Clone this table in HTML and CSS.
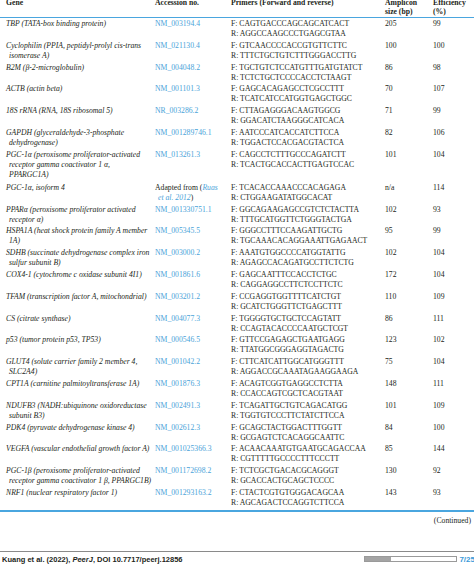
FILE: index.html
```html
<!DOCTYPE html>
<html>
<head>
<meta charset="utf-8">
<link rel="stylesheet" href="styles.css">
</head>
<body>
<div class="page">
<table class="primers">
<colgroup>
<col class="c-gene"><col class="c-acc"><col class="c-pri"><col class="c-amp"><col class="c-eff">
</colgroup>
<thead>
<tr>
<th class="gene">Gene</th>
<th>Accession no.</th>
<th>Primers (Forward and reverse)</th>
<th>Amplicon<br>size (bp)</th>
<th>Efficiency<br>(%)</th>
</tr>
</thead>
<tbody>
<tr><td class="gene">TBP (TATA-box binding protein)</td><td class="acc">NM_003194.4</td><td>F: CAGTGACCCAGCAGCATCACT<br>R: AGGCCAAGCCCTGAGCGTAA</td><td>205</td><td>99</td></tr>
<tr><td class="gene">Cyclophilin (PPIA, peptidyl-prolyl cis-trans<br>isomerase A)</td><td class="acc">NM_021130.4</td><td>F: GTCAACCCCACCGTGTTCTTC<br>R: TTTCTGCTGTCTTTGGGACCTTG</td><td>100</td><td>100</td></tr>
<tr><td class="gene">B2M (β-2-microglobulin)</td><td class="acc">NM_004048.2</td><td>F: TGCTGTCTCCATGTTTGATGTATCT<br>R: TCTCTGCTCCCCACCTCTAAGT</td><td>86</td><td>98</td></tr>
<tr><td class="gene">ACTB (actin beta)</td><td class="acc">NM_001101.3</td><td>F: GAGCACAGAGCCTCGCCTTT<br>R: TCATCATCCATGGTGAGCTGGC</td><td>70</td><td>107</td></tr>
<tr><td class="gene">18S rRNA (RNA, 18S ribosomal 5)</td><td class="acc">NR_003286.2</td><td>F: CTTAGAGGGACAAGTGGCG<br>R: GGACATCTAAGGGCATCACA</td><td>71</td><td>99</td></tr>
<tr><td class="gene">GAPDH (glyceraldehyde-3-phosphate<br>dehydrogenase)</td><td class="acc">NM_001289746.1</td><td>F: AATCCCATCACCATCTTCCA<br>R: TGGACTCCACGACGTACTCA</td><td>82</td><td>106</td></tr>
<tr class="tall"><td class="gene">PGC-1α (peroxisome proliferator-activated<br>receptor gamma coactivator 1 α,<br>PPARGC1A)</td><td class="acc">NM_013261.3</td><td>F: CAGCCTCTTTGCCCAGATCTT<br>R: TCACTGCACCACTTGAGTCCAC</td><td>101</td><td>104</td></tr>
<tr><td class="gene">PGC-1α, isoform 4</td><td class="src">Adapted from (<a class="ref">Ruas<br>et al. 2012</a>)</td><td>F: TCACACCAAACCCACAGAGA<br>R: CTGGAAGATATGGCACAT</td><td>n/a</td><td>114</td></tr>
<tr><td class="gene">PPARα (peroxisome proliferator activated<br>receptor α)</td><td class="acc">NM_001330751.1</td><td>F: GGCAGAAGAGCCGTCTCTACTTA<br>R: TTTGCATGGTTCTGGGTACTGA</td><td>102</td><td>93</td></tr>
<tr><td class="gene">HSPA1A (heat shock protein family A member<br>1A)</td><td class="acc">NM_005345.5</td><td>F: GGGCCTTTCCAAGATTGCTG<br>R: TGCAAACACAGGAAATTGAGAACT</td><td>95</td><td>99</td></tr>
<tr><td class="gene">SDHB (succinate dehydrogenase complex iron<br>sulfur subunit B)</td><td class="acc">NM_003000.2</td><td>F: AAATGTGGCCCCATGGTATTG<br>R: AGAGCCACAGATGCCTTCTCTG</td><td>102</td><td>104</td></tr>
<tr><td class="gene">COX4-1 (cytochrome c oxidase subunit 4I1)</td><td class="acc">NM_001861.6</td><td>F: GAGCAATTTCCACCTCTGC<br>R: CAGGAGGCCTTCTCCTTCTC</td><td>172</td><td>104</td></tr>
<tr><td class="gene">TFAM (transcription factor A, mitochondrial)</td><td class="acc">NM_003201.2</td><td>F: CCGAGGTGGTTTTCATCTGT<br>R: GCATCTGGGTTCTGAGCTTT</td><td>110</td><td>109</td></tr>
<tr><td class="gene">CS (citrate synthase)</td><td class="acc">NM_004077.3</td><td>F: TGGGGTGCTGCTCCAGTATT<br>R: CCAGTACACCCCAATGCTCGT</td><td>86</td><td>111</td></tr>
<tr><td class="gene">p53 (tumor protein p53, TP53)</td><td class="acc">NM_000546.5</td><td>F: GTTCCGAGAGCTGAATGAGG<br>R: TTATGGCGGGAGGTAGACTG</td><td>123</td><td>102</td></tr>
<tr><td class="gene">GLUT4 (solute carrier family 2 member 4,<br>SLC2A4)</td><td class="acc">NM_001042.2</td><td>F: CTTCATCATTGGCATGGGTTT<br>R: AGGACCGCAAATAGAAGGAAGA</td><td>75</td><td>104</td></tr>
<tr><td class="gene">CPT1A (carnitine palmitoyltransferase 1A)</td><td class="acc">NM_001876.3</td><td>F: ACAGTCGGTGAGGCCTCTTA<br>R: CCACCAGTCGCTCACGTAAT</td><td>148</td><td>111</td></tr>
<tr><td class="gene">NDUFB3 (NADH:ubiquinone oxidoreductase<br>subunit B3)</td><td class="acc">NM_002491.3</td><td>F: TCAGATTGCTGTCAGACATGG<br>R: TGGTGTCCCTTCTATCTTCCA</td><td>101</td><td>109</td></tr>
<tr><td class="gene">PDK4 (pyruvate dehydrogenase kinase 4)</td><td class="acc">NM_002612.3</td><td>F: GCAGCTACTGGACTTTGGTT<br>R: GCGAGTCTCACAGGCAATTC</td><td>84</td><td>100</td></tr>
<tr><td class="gene">VEGFA (vascular endothelial growth factor A)</td><td class="acc">NM_001025366.3</td><td>F: ACAACAAATGTGAATGCAGACCAA<br>R: CGTTTTTGCCCCTTTCCCTT</td><td>85</td><td>144</td></tr>
<tr><td class="gene">PGC-1β (peroxisome proliferator-activated<br>receptor gamma coactivator 1 β, PPARGC1B)</td><td class="acc">NM_001172698.2</td><td>F: TCTCGCTGACACGCAGGGT<br>R: GCACCACTGCAGCTCCCC</td><td>130</td><td>92</td></tr>
<tr class="last"><td class="gene">NRF1 (nuclear respiratory factor 1)</td><td class="acc">NM_001293163.2</td><td>F: CTACTCGTGTGGGACAGCAA<br>R: AGCAGACTCCAGGTCTTCCA</td><td>143</td><td>93</td></tr>
</tbody>
</table>
<div class="continued">(Continued)</div>
<div class="footer">
<div class="cite">Kuang et al. (2022), <i>PeerJ</i>, DOI 10.7717/peerj.12856</div>
<div class="pager">
<div class="bar"><div class="fill" style="width:28%"></div></div>
<span class="pnum">7/25</span>
</div>
</div>
</div>
</body>
</html>
```
FILE: styles.css
```css
html, body {
  margin: 0;
  padding: 0;
  background: #ffffff;
}
.page {
  width: 474px;
  height: 567px;
  overflow: hidden;
  display: flex;
  flex-direction: column;
  color: #231f20;
  font-family: "Liberation Serif", "Times New Roman", serif;
}
.primers {
  width: 474px;
  flex: none;
  table-layout: fixed;
  border-collapse: collapse;
  margin-top: -2.5px;
  font-size: 7.7px;
  line-height: 10px;
}
.c-gene { width: 155px; }
.c-acc { width: 76px; }
.c-pri { width: 154px; }
.c-amp { width: 48px; }
.c-eff { width: 41px; }
th {
  text-align: left;
  vertical-align: top;
  font-weight: bold;
  white-space: nowrap;
  padding: 0;
  line-height: 9.8px;
  border-bottom: 1.5px solid #4aa6df;
}
td {
  vertical-align: top;
  white-space: nowrap;
  padding: 1px 0 0.8px 0;
}
th.gene { padding-left: 6px; }
td.gene {
  font-style: italic;
  padding-left: 9px;
  text-indent: -3px;
}
td.acc { color: #4aa3d9; }
td.src { padding-left: 3px; text-indent: -3px; }
.ref { color: #4aa3d9; font-style: italic; }
tr.tall td { padding-bottom: 2px; }
tr.last td { border-bottom: 2px solid #4aa6df; padding-bottom: 1.5px; }
.continued {
  text-align: right;
  font-size: 7.7px;
  line-height: 10px;
  padding: 4px 3px 0 0;
}
.footer {
  margin-top: auto;
  border-top: 1px solid #8a8a8a;
  display: flex;
  align-items: center;
  justify-content: space-between;
  height: 14px;
  padding: 0 0 1px 2px;
  font-family: "Liberation Sans", Arial, sans-serif;
  font-weight: bold;
  font-size: 7.5px;
}
.pager {
  display: flex;
  align-items: center;
  margin-right: -1px;
}
.bar {
  width: 91px;
  height: 4px;
  border: 1px solid #9a9a9a;
  background: #ffffff;
}
.fill {
  height: 100%;
  background: #a4a4a4;
}
.pnum {
  color: #3a9ad9;
  margin-left: 2px;
  font-size: 8px;
}
```
